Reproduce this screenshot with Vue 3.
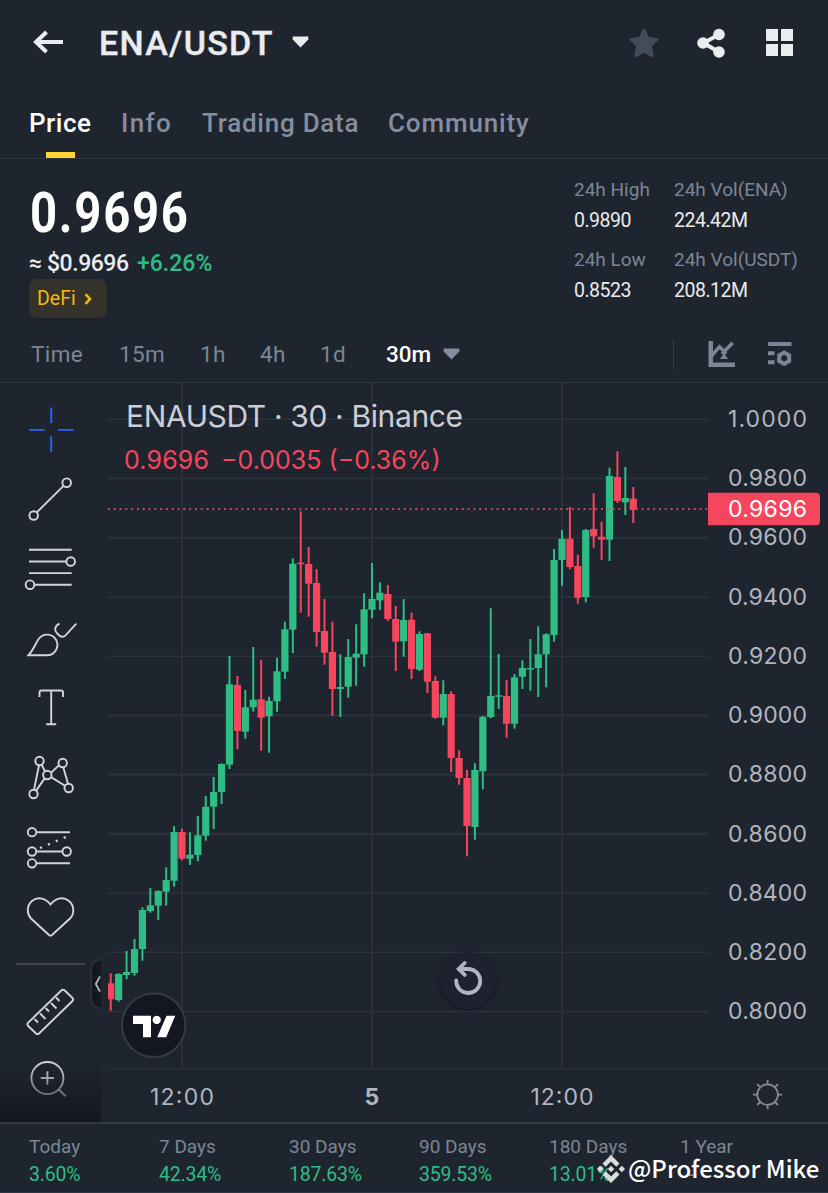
<script setup>
const tabs = ['Price', 'Info', 'Trading Data', 'Community']
const stats = [
  ['24h High', '0.9890'],
  ['24h Vol(ENA)', '224.42M'],
  ['24h Low', '0.8523'],
  ['24h Vol(USDT)', '208.12M'],
]
const periods = ['Time', '15m', '1h', '4h', '1d']
const returns = [
  ['Today', '3.60%'],
  ['7 Days', '42.34%'],
  ['30 Days', '187.63%'],
  ['90 Days', '359.53%'],
  ['180 Days', '13.01%'],
  ['1 Year', '-'],
]

const prices = ['1.0000', '0.9800', '0.9600', '0.9400', '0.9200', '0.9000', '0.8800', '0.8600', '0.8400', '0.8200', '0.8000']
const gridY = (i) => 419.3 + i * 59.22

// direction, high, body top, body bottom, low
const candles = [
  ['r', 973.3, 983.3, 999.3, 1010.7], ['g', 973.3, 974, 1000, 1001.7], ['g', 951, 972, 975, 979.3],
  ['g', 939, 949, 973, 975.7], ['g', 907.3, 910, 949, 960.7], ['g', 888, 905.3, 911, 912.7],
  ['g', 890.3, 891, 905.7, 920], ['g', 867.3, 880, 891.7, 905.7], ['g', 826, 832, 880.7, 886.7],
  ['r', 828.7, 832, 858.7, 860.3], ['g', 832.3, 854.7, 858.7, 865], ['g', 816, 835.3, 855, 861.3],
  ['g', 796, 806.7, 835.7, 840.7], ['g', 777, 792, 806.7, 829], ['g', 763.3, 764, 792, 804],
  ['g', 656, 684.3, 764.7, 769], ['r', 676, 685, 731, 749.3], ['g', 690, 707.3, 731.7, 738.7],
  ['g', 647, 699.7, 707.3, 711.7], ['r', 660, 699.3, 717.7, 750.7], ['g', 696.7, 701, 716.3, 752.7],
  ['g', 657.7, 671.3, 701.3, 711.7], ['g', 621.7, 629.3, 671.7, 679], ['g', 558.3, 563.7, 629.7, 653],
  ['r', 511.3, 562.7, 564.2, 612.7], ['r', 547, 564, 583.7, 616.7], ['r', 569, 583, 632, 646.7],
  ['r', 599, 631, 652.7, 664.7], ['r', 621.7, 652, 689, 715.7], ['g', 654.3, 687, 689, 717],
  ['g', 639, 657, 686.7, 697.7], ['g', 624.3, 653.7, 657.7, 685.7], ['g', 593.3, 609.3, 654.3, 666.7],
  ['g', 563, 599, 609.7, 618.3], ['g', 582.3, 592.7, 600.3, 610], ['r', 585, 594, 619, 620.7],
  ['r', 606, 619, 641.7, 671], ['g', 599, 620, 641.3, 656.7], ['r', 612.7, 619.7, 669, 679],
  ['g', 631.3, 634, 669.7, 671], ['r', 633, 633.3, 681.7, 693], ['r', 676.3, 681, 717.7, 718.7],
  ['g', 680.3, 694, 717.7, 725.3], ['r', 691.3, 694, 758, 772], ['r', 750.3, 758, 778, 784.7],
  ['r', 770, 778, 826, 856.3], ['g', 763.3, 770, 827, 839.7], ['g', 716, 716.7, 771.3, 789.3],
  ['g', 608.3, 696, 717, 718.3], ['g', 654, 695.3, 696.8, 709], ['r', 680, 696, 723.7, 737.7],
  ['g', 674, 677.3, 723.7, 728.7], ['g', 660.3, 668, 676.7, 689], ['g', 639, 668, 669.5, 690.7],
  ['g', 626.3, 654.3, 668, 697], ['g', 633.3, 634.3, 654.3, 687.3], ['g', 549, 560, 635, 641.7],
  ['g', 530, 538.7, 560, 585.7], ['r', 507, 538.7, 567, 569.3], ['r', 554.7, 566, 597.7, 603.7],
  ['g', 529, 530, 597, 602.3], ['r', 493.3, 529, 536.3, 547.7], ['r', 521.7, 536.7, 539.7, 560],
  ['g', 467.7, 476, 539.7, 561], ['r', 451.3, 477, 501, 503], ['g', 467, 498, 502.3, 515],
  ['r', 487, 498.7, 509.7, 523],
].map(([dir, high, top, bottom, low], i) => ({ dir, high, top, bottom, low, x: 110.75 + i * 7.9167 }))
</script>

<template>
  <div class="screen">
    <header class="topbar">
      <svg class="back" viewBox="0 0 30 24" width="30" height="24"><path d="M30 12H4M13.500 2 3 12l10.500 10" /></svg>
      <h1><span>ENA/USDT</span></h1>
      <svg class="caret" viewBox="0 0 17 12" width="17" height="12"><path d="M.7.500h15.600v3L8.500 11.400.7 3.500z" /></svg>
      <div class="actions">
        <svg class="star" viewBox="0 0 30 30" width="30" height="30"><path d="M15 1.800 19 10.200 28.200 11.400 21.500 17.800 23.300 27.800 15 23.300 6.700 27.800 8.500 17.800 1.800 11.400 11 10.200Z" /></svg>
        <svg class="share" viewBox="0 0 30 30" width="30" height="30"><path d="M23 6.500 7.500 15 23 24" /><circle cx="23" cy="6.500" r="5.800" /><circle cx="7" cy="15" r="5.800" /><circle cx="23" cy="24" r="5.800" /></svg>
        <svg class="apps" viewBox="0 0 27 27" width="27" height="27"><path d="M0 0h12v12H0zM15 0h12v12H15zM0 15h12v12H0zM15 15h12v12H15z" /></svg>
      </div>
    </header>

    <nav class="tabs">
      <a v-for="(t, i) in tabs" :key="t" :class="['tab', 't' + i]">{{ t }}</a>
    </nav>

    <section class="summary">
      <div class="quote">
        <div class="last"><span>0.9696</span></div>
        <div class="fiat"><span class="approx">≈ $0.9696</span><span class="up">+6.26%</span></div>
        <div class="tag"><span>DeFi</span><svg viewBox="0 0 8 12" width="8" height="12"><path d="M1.500 1.200 6 6l-4.500 4.800" /></svg></div>
      </div>
      <div class="stats">
        <div v-for="s in stats" :key="s[0]" class="stat"><div class="label">{{ s[0] }}</div><div class="value"><span>{{ s[1] }}</span></div></div>
      </div>
    </section>

    <div class="periods">
      <span v-for="p in periods" :key="p">{{ p }}</span>
      <span class="current">30m</span>
      <svg class="caret dim" viewBox="0 0 17 12" width="17" height="12"><path d="M.7.500h15.600v3L8.500 11.400.7 3.500z" /></svg>
      <div class="chart-actions">
        <svg viewBox="708 340 28 28" width="28" height="28">
          <path class="solid" d="M708.500 341h4.500v21.500h22v4.500h-26.500zM720.500 352h7l-2.500 3 3.200 4h-8.400l3.200-4z" />
          <path class="stroke" d="M711.500 356l8-9.300 4.800 4.800 8.400-8.800" />
        </svg>
        <svg viewBox="767 341 26 26" width="26" height="26">
          <path class="solid" fill-rule="evenodd" d="M768 342h23.500v4H768zM768 351.300h6.500v3.900H768zM768 360.300h6.500v3.900H768zM784.200 350.200l7 4v8l-7 4-7-4v-8zM784.200 355.100a3.100 3.100 0 1 0 .01 0z" />
        </svg>
      </div>
    </div>

    <main class="chart">
      <aside class="tools">
        <svg class="cross" viewBox="0 395.500 101 69.500"><path d="M51.200 408v15.500M51.200 437v15.500M29 430.400h15.500M58 430.400h15.800" /></svg>
        <svg viewBox="0 465 101 69.500"><circle cx="66.700" cy="482.700" r="4.300" /><circle cx="33.700" cy="515.500" r="4.300" /><path d="M63.500 485.800 36.800 512.400" /></svg>
        <svg viewBox="0 534.500 101 69.500"><path d="M29 550.300h42.700M29 562h37.300M29 573.600h42.700M34.300 585.200h37.400" /><circle cx="70.700" cy="562" r="4.300" /><circle cx="30" cy="585.200" r="4.300" /></svg>
        <svg viewBox="0 604 101 69.500"><path d="M28.500 655.200C34 649 36.500 641.500 39 638.500A10.300 10.300 0 1 1 47 655.200ZM59.500 623.700c-5 2.500-5.500 6.300-2.500 9.500l2.500 2.300c2 1.700 4.300 1.500 6-.2L76.300 623.700" /></svg>
        <svg viewBox="0 673.500 101 69.500"><path d="M39.500 697.500v-4.500q0-2 2-2h19.500q2 0 2 2v4.500M51.200 691v33.700M46.200 724.700h10" /></svg>
        <svg viewBox="0 743 101 69.500"><path d="M39 765.200 34 789.800M41.600 764.800 45 771.300M51 772.900 59 765.200M63.300 767.200 68 783.800M51.100 777.100 65 785.800M44.700 778.400 36.100 790.600" /><circle cx="39.500" cy="761" r="4.200" /><circle cx="62.700" cy="763" r="4.200" /><circle cx="47.300" cy="775" r="4.200" /><circle cx="33.500" cy="794" r="4.200" /><circle cx="68.700" cy="788" r="4.200" /></svg>
        <svg viewBox="0 812.500 101 69.500"><path d="M36.300 832.700H70M36.300 852h26.200M36.300 863.800H70" /><path class="dots" d="M40 848.600 68 836.500" /><circle cx="32" cy="832.700" r="4.200" /><circle cx="32" cy="852" r="4.200" /><circle cx="66.700" cy="852" r="4.200" /><circle cx="32" cy="863.800" r="4.200" /></svg>
        <svg viewBox="0 882 101 69.500"><path d="M50.500 904.500C46 898.500 38 896 32 901S27.200 914.500 31 918.500L49 935q1.500 1.200 3 0L70 918.500C74 914.500 75 906 69 901S55 898.500 50.500 904.500Z" /></svg>
        <div class="rule"></div>
        <svg viewBox="0 977 101 69.500"><path d="M61.500 990.300q1.500-1.200 3 0l8 7.700q1.200 1.500 0 3L39 1033.500q-1.500 1.200-3 0l-8-7.700q-1.200-1.500 0-3ZM34.500 1019l3.500 3.500M40 1013.500l5.500 5.500M45.500 1008l3.500 3.500M51 1003l5.500 5.500M56 997.500l3.500 3.500" /></svg>
        <svg viewBox="0 1046.500 101 69.500"><circle cx="47.400" cy="1078.500" r="16" /><path d="M58.800 1090 65.700 1096.800M40.700 1078.500h13.400M47.400 1071.800v13.400" /></svg>
        <div class="fade"></div>
      </aside>

      <svg class="plot" viewBox="101 383 727 739" width="727" height="739">
        <defs>
          <filter id="soft" x="-40%" y="-40%" width="180%" height="180%"><feDropShadow dx="0" dy="3" stdDeviation="3" flood-color="#10131b" flood-opacity=".6" /></filter>
        </defs>
        <g class="grid">
          <path v-for="(p, i) in prices" :key="p" :d="`M108 ${gridY(i)}H708`" />
          <path d="M182 383V1068M372 383V1068M562 383V1068" />
          <path class="axis" d="M108 1069H708M710 1069H828" />
        </g>
        <g v-for="c in candles" :key="c.x" :class="c.dir">
          <rect :x="c.x - 1" :y="c.high" width="2" :height="c.low - c.high" />
          <rect :x="c.x < 111 ? 108 : c.x - 3.600" :y="c.top" :width="c.x < 111 ? 6.300 : 7.200" :height="c.bottom - c.top" />
        </g>
        <path class="last-line" d="M108 509.200H708" />
        <text class="symbol" x="126" y="427" textLength="337">ENAUSDT · 30 · Binance</text>
        <text class="change" x="124" y="468.700" textLength="85">0.9696</text>
        <text class="change" x="221" y="468.700" textLength="219.500">−0.0035 (−0.36%)</text>
        <text v-for="(p, i) in prices" :key="'l' + p" class="price" x="728" :y="gridY(i) + 7.700" textLength="79">{{ p }}</text>
        <path class="badge" d="M708 492.700h108q4 0 4 4v24.600q0 4-4 4H708z" />
        <text class="price on" x="728" y="517.200" textLength="79">0.9696</text>
        <text class="time" x="150" y="1105" textLength="64">12:00</text>
        <text class="time bold" x="364.500" y="1105">5</text>
        <text class="time" x="530.500" y="1105" textLength="63">12:00</text>

        <g class="tv"><circle cx="153.700" cy="1025.300" r="31.700" /><path d="M133 1015.800h18v21.400h-8v-13.300h-10zM166.500 1015.800h8.700l-9 21.400h-9zM156.700 1015.800a4.100 4.100 0 1 0 .01 0z" /></g>
        <g class="reset"><circle cx="468" cy="979" r="27" filter="url(#soft)" /><path d="M456.200 980.500A12 12 0 1 0 468 969h-8M464.700 963l-6 5.900 6 6" /></g>
        <g class="sun"><circle cx="767.600" cy="1094.600" r="10.300" /><path d="M767.600 1080v4.300M767.600 1104.900v4.300M753 1094.600h4.300M777.900 1094.600h4.300M757.200 1084.200l3 3M775 1102l3 3M757.200 1105l3-3M775 1087.200l3-3" /></g>
      </svg>
      <div class="collapse"><svg viewBox="90 957 12 54" width="12" height="54"><path class="shell" d="M102 959.500q-11 0-11 10v29q0 10 11 10" /><path class="chev" d="M100 976.500 95.800 984l4.200 7.500" /></svg></div>
    </main>

    <footer class="returns">
      <div v-for="r in returns" :key="r[0]" class="ret"><div class="label">{{ r[0] }}</div><div :class="['pct', { none: r[1] === '-' }]">{{ r[1] }}</div></div>
      <div class="signature">
        <svg viewBox="0 0 28 28" width="28" height="28"><path d="M14 0 22.500 8.500 19.300 11.700 14 6.400 8.700 11.700 5.500 8.500ZM14 28 5.500 19.500 8.700 16.300 14 21.600 19.300 16.300 22.500 19.500ZM14 10.800 17.200 14 14 17.200 10.800 14ZM3.200 10.800 6.400 14 3.200 17.200 0 14ZM24.800 10.800 28 14 24.800 17.200 21.600 14Z" /></svg>
        <span>@Professor Mike</span>
      </div>
    </footer>
  </div>
</template>

<style>
body { background: #1f252f; }
</style>

<style scoped>
.screen { width: 828px; height: 1193px; display: flex; flex-direction: column; overflow: hidden; background: #1f252f; color: #eaecef; font-family: Roboto, "Liberation Sans", sans-serif; box-sizing: border-box; border-bottom: 1px solid #2e343f; }
svg { display: block; flex: none; }

.topbar { height: 85px; flex: none; display: flex; align-items: center; padding: 0 35px 0 33px; box-sizing: border-box; }
.back { fill: none; stroke: #eaecef; stroke-width: 4; margin-top: -1px; }
h1 { margin: 0 0 0 36px; width: 193px; font-size: 34px; line-height: 40px; font-weight: 500; letter-spacing: 1.3px; -webkit-text-stroke: .4px #eaecef; }
.topbar .caret { margin-top: -1px; }
.caret { fill: #eaecef; }
.actions { margin-left: auto; display: flex; align-items: center; }
.star { fill: #434c5a; stroke: #434c5a; stroke-width: 2.500; stroke-linejoin: round; margin-right: 37px; }
.share { fill: #eaecef; margin-right: 40px; }
.share path { fill: none; stroke: #eaecef; stroke-width: 4; }
.apps { fill: #eaecef; }

.tabs { height: 74px; flex: none; box-sizing: border-box; border-bottom: 1px solid #2e3540; display: flex; padding-left: 29px; }
.tab { position: relative; font-size: 26px; line-height: 76px; font-weight: 500; color: #848e9f; letter-spacing: .85px; }
.t0 { color: #fff; width: 92px; letter-spacing: .5px; }
.t0::after { content: ""; position: absolute; left: 17px; bottom: 0; width: 29px; height: 6px; background: #fcd535; }
.t1 { width: 81px; letter-spacing: 1.300px; }
.t2 { width: 186px; letter-spacing: .75px; }

.summary { height: 170px; flex: none; display: flex; }
.quote { width: 544px; padding-left: 30px; box-sizing: content-box; }
.last { font-size: 55px; line-height: 60px; margin-top: 24px; font-weight: 700; color: #fff; }
.last span { display: inline-block; transform: scaleX(.86); transform-origin: left; letter-spacing: 2px; }
.fiat { display: flex; font-size: 23px; line-height: 30px; margin-top: 6px; font-weight: 500; }
.approx { width: 108px; margin-left: -1px; letter-spacing: -.45px; }
.up { color: #2ebd85; }
.tag { display: flex; align-items: center; gap: 8px; width: 78px; height: 39px; margin: 0 0 0 -1px; padding-left: 8px; box-sizing: border-box; border-radius: 8px; background: #35322c; color: #f0b90b; font-size: 19.500px; }
.tag path { fill: none; stroke: #f0b90b; stroke-width: 2.600; }
.stats { display: grid; grid-template-columns: 100px 150px; grid-auto-rows: 70px; padding-top: 15px; }
.label { font-size: 19px; line-height: 31px; color: #7c8595; white-space: nowrap; }
.value { font-size: 19.500px; line-height: 32px; letter-spacing: -.5px; }

.periods { height: 54px; flex: none; box-sizing: border-box; border-bottom: 1px solid #2e3540; display: grid; grid-template-columns: 88px 81px 60px 60px 66px 57px 230px 1fr; align-items: center; padding: 0 0 3px 31px; font-size: 22.500px; color: #7c8595; letter-spacing: .4px; }
.periods .current { color: #fff; font-weight: 500; letter-spacing: 0; }
.caret.dim { fill: #848e9f; }
.chart-actions { display: flex; align-items: center; height: 31px; gap: 31px; padding-left: 34px; border-left: 1px solid #343b47; }
.solid { fill: #7c8595; }
.stroke { fill: none; stroke: #7c8595; stroke-width: 3.500; }

.chart { position: relative; height: 739px; flex: none; display: flex; }
.tools { position: relative; width: 101px; box-sizing: border-box; padding-top: 12px; }
.tools svg { width: 101px; height: 69.500px; fill: none; stroke: #d1d4dc; stroke-width: 1.900; }
.tools .cross { stroke: #2962ff; }
.tools .dots { stroke-dasharray: 2.200 6.400; stroke-width: 2.200; }
.rule { height: 25.500px; margin: 0 16px; box-sizing: border-box; background: linear-gradient(#434651, #434651) 0 12px / 100% 2px no-repeat; }
.fade { position: absolute; left: 0; right: 0; bottom: 0; height: 60px; background: linear-gradient(#13172200, #131722); }
.grid path { stroke: #2d333d; stroke-width: 1.600; }
.grid .axis { stroke: #2a303a; }
.r { fill: #f6465d; }
.g { fill: #2ebd85; }
.last-line { stroke: #f6465d; stroke-width: 1.800; stroke-dasharray: 1.900 3.900; }
text { font-family: Inter, "Liberation Sans", sans-serif; }
.symbol { font-size: 30px; fill: #cbced6; }
.change { font-size: 25px; fill: #f6465d; }
.price, .time { font-size: 23px; fill: #b2b5be; }
.on { fill: #fff; }
.bold { font-weight: 700; }
.badge { fill: #f6465d; }
.tv circle { fill: #131722; stroke: #363a45; stroke-width: 2; }
.tv path { fill: #fff; }
.reset circle { fill: #1e222d; }
.reset path { fill: none; stroke: #b2b5be; stroke-width: 3.800; stroke-linecap: round; }
.sun { fill: none; stroke: #868993; stroke-width: 1.800; }
.collapse { position: absolute; left: 90px; top: 574px; width: 11px; overflow: hidden; }
.shell { fill: #131722; stroke: #2a2e39; stroke-width: 2; }
.chev { fill: none; stroke: #b2b5be; stroke-width: 1.800; }

.returns { position: relative; flex: 1; border-top: 2px solid #333a45; display: grid; grid-template-columns: 130px 130px 130px 130px 131px 1fr; padding: 9px 0 0 29px; }
.returns .label { line-height: 28px; }
.pct { font-size: 19.500px; line-height: 27px; color: #2ebd85; letter-spacing: -.2px; }
.none { color: #7c8595; padding-left: 8px; }
.signature { position: absolute; left: 597px; top: 28px; display: flex; align-items: center; gap: 3px; color: #fff; font: 500 24px/32px "Noto Sans CJK SC", sans-serif; white-space: nowrap; }
.signature svg { fill: #dcdcdc; margin-top: 1px; }
</style>
